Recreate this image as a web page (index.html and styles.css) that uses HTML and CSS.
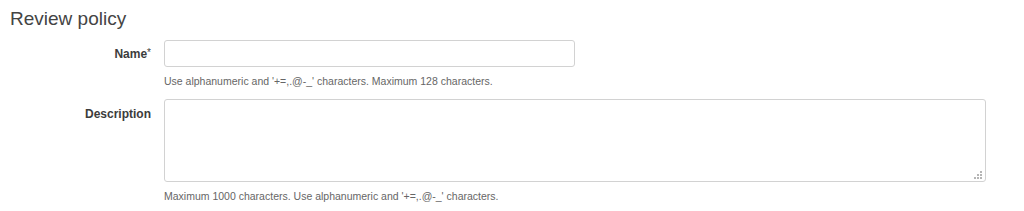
FILE: index.html
```html
<!DOCTYPE html>
<html lang="en">
<head>
  <meta charset="UTF-8">
  <title>Review policy</title>
  <link rel="stylesheet" href="styles.css">
</head>
<body>
<h2 class="page-title">Review policy</h2>

<form class="policy-form">
  <div class="form-row">
    <label class="form-label" for="policy-name">Name<span class="req">*</span></label>
    <div class="form-field">
      <input type="text" id="policy-name" class="text-input name-input">
      <p class="help-text">Use alphanumeric and '+=,.@-_' characters. Maximum 128 characters.</p>
    </div>
  </div>

  <div class="form-row">
    <label class="form-label desc-label" for="policy-desc">Description</label>
    <div class="form-field">
      <div class="textarea-wrap">
        <textarea id="policy-desc" class="text-input desc-input"></textarea>
        <svg class="grip" width="9" height="9" viewBox="0 0 9 9">
          <rect x="6" y="0" width="2" height="2" fill="#b5b5b5"/>
          <rect x="3" y="3" width="2" height="2" fill="#b5b5b5"/>
          <rect x="6" y="3" width="2" height="2" fill="#b5b5b5"/>
          <rect x="0" y="6" width="2" height="2" fill="#b5b5b5"/>
          <rect x="3" y="6" width="2" height="2" fill="#b5b5b5"/>
          <rect x="6" y="6" width="2" height="2" fill="#b5b5b5"/>
        </svg>
      </div>
      <p class="help-text">Maximum 1000 characters. Use alphanumeric and '+=,.@-_' characters.</p>
    </div>
  </div>
</form>
</body>
</html>
```

FILE: styles.css
```css
body {
  margin: 0;
  padding: 7px 0 0 10px;
  font-family: "Liberation Sans", Arial, sans-serif;
  background: #fff;
  color: #444;
}

.page-title {
  margin: 0;
  font-size: 19px;
  font-weight: normal;
  line-height: 24px;
  color: #444;
}

.policy-form {
  margin-top: 9px;
}

.form-row {
  display: flex;
  gap: 13px;
  margin-bottom: 11px;
}

.form-label {
  width: 141px;
  flex: none;
  text-align: right;
  font-size: 12px;
  font-weight: bold;
  line-height: 14px;
  padding-top: 7px;
  color: #3c3c3c;
}

.desc-label {
  padding-top: 8px;
}

.req {
  font-size: 10px;
  font-weight: normal;
  vertical-align: top;
  position: relative;
  top: -1px;
}

.form-field {
  display: flex;
  flex-direction: column;
}

.text-input {
  box-sizing: border-box;
  margin: 0;
  border: 1px solid #d2d2d2;
  border-radius: 3px;
  background: #fff;
  font-family: inherit;
  font-size: 12px;
  display: block;
}

.name-input {
  width: 411px;
  height: 27px;
}

.textarea-wrap {
  position: relative;
}

.desc-input {
  width: 822px;
  height: 83px;
  resize: none;
}

.grip {
  position: absolute;
  right: 3px;
  bottom: 2px;
}

.help-text {
  margin: 7px 0 0;
  font-size: 10.5px;
  line-height: 14px;
  color: #666;
}
```
